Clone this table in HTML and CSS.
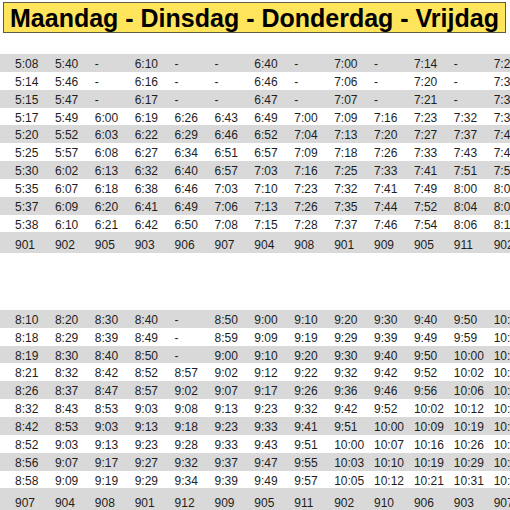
FILE: index.html
```html
<!DOCTYPE html>
<html lang="nl">
<head>
<meta charset="utf-8">
<title>Dienstregeling</title>
<link rel="stylesheet" href="styles.css">
</head>
<body>
<h1 class="banner">Maandag - Dinsdag - Donderdag - Vrijdag</h1>

<div class="table first">
  <div class="row"><span>5:08</span><span>5:40</span><span>-</span><span>6:10</span><span>-</span><span>-</span><span>6:40</span><span>-</span><span>7:00</span><span>-</span><span>7:14</span><span>-</span><span>7:28</span></div>
  <div class="row"><span>5:14</span><span>5:46</span><span>-</span><span>6:16</span><span>-</span><span>-</span><span>6:46</span><span>-</span><span>7:06</span><span>-</span><span>7:20</span><span>-</span><span>7:34</span></div>
  <div class="row"><span>5:15</span><span>5:47</span><span>-</span><span>6:17</span><span>-</span><span>-</span><span>6:47</span><span>-</span><span>7:07</span><span>-</span><span>7:21</span><span>-</span><span>7:35</span></div>
  <div class="row"><span>5:17</span><span>5:49</span><span>6:00</span><span>6:19</span><span>6:26</span><span>6:43</span><span>6:49</span><span>7:00</span><span>7:09</span><span>7:16</span><span>7:23</span><span>7:32</span><span>7:37</span></div>
  <div class="row"><span>5:20</span><span>5:52</span><span>6:03</span><span>6:22</span><span>6:29</span><span>6:46</span><span>6:52</span><span>7:04</span><span>7:13</span><span>7:20</span><span>7:27</span><span>7:37</span><span>7:41</span></div>
  <div class="row"><span>5:25</span><span>5:57</span><span>6:08</span><span>6:27</span><span>6:34</span><span>6:51</span><span>6:57</span><span>7:09</span><span>7:18</span><span>7:26</span><span>7:33</span><span>7:43</span><span>7:47</span></div>
  <div class="row"><span>5:30</span><span>6:02</span><span>6:13</span><span>6:32</span><span>6:40</span><span>6:57</span><span>7:03</span><span>7:16</span><span>7:25</span><span>7:33</span><span>7:41</span><span>7:51</span><span>7:55</span></div>
  <div class="row"><span>5:35</span><span>6:07</span><span>6:18</span><span>6:38</span><span>6:46</span><span>7:03</span><span>7:10</span><span>7:23</span><span>7:32</span><span>7:41</span><span>7:49</span><span>8:00</span><span>8:04</span></div>
  <div class="row"><span>5:37</span><span>6:09</span><span>6:20</span><span>6:41</span><span>6:49</span><span>7:06</span><span>7:13</span><span>7:26</span><span>7:35</span><span>7:44</span><span>7:52</span><span>8:04</span><span>8:08</span></div>
  <div class="row"><span>5:38</span><span>6:10</span><span>6:21</span><span>6:42</span><span>6:50</span><span>7:08</span><span>7:15</span><span>7:28</span><span>7:37</span><span>7:46</span><span>7:54</span><span>8:06</span><span>8:10</span></div>
  <div class="row bus"><span>901</span><span>902</span><span>905</span><span>903</span><span>906</span><span>907</span><span>904</span><span>908</span><span>901</span><span>909</span><span>905</span><span>911</span><span>902</span></div>
</div>

<div class="table second">
  <div class="row"><span>8:10</span><span>8:20</span><span>8:30</span><span>8:40</span><span>-</span><span>8:50</span><span>9:00</span><span>9:10</span><span>9:20</span><span>9:30</span><span>9:40</span><span>9:50</span><span>10:00</span></div>
  <div class="row"><span>8:18</span><span>8:29</span><span>8:39</span><span>8:49</span><span>-</span><span>8:59</span><span>9:09</span><span>9:19</span><span>9:29</span><span>9:39</span><span>9:49</span><span>9:59</span><span>10:09</span></div>
  <div class="row"><span>8:19</span><span>8:30</span><span>8:40</span><span>8:50</span><span>-</span><span>9:00</span><span>9:10</span><span>9:20</span><span>9:30</span><span>9:40</span><span>9:50</span><span>10:00</span><span>10:10</span></div>
  <div class="row"><span>8:21</span><span>8:32</span><span>8:42</span><span>8:52</span><span>8:57</span><span>9:02</span><span>9:12</span><span>9:22</span><span>9:32</span><span>9:42</span><span>9:52</span><span>10:02</span><span>10:12</span></div>
  <div class="row"><span>8:26</span><span>8:37</span><span>8:47</span><span>8:57</span><span>9:02</span><span>9:07</span><span>9:17</span><span>9:26</span><span>9:36</span><span>9:46</span><span>9:56</span><span>10:06</span><span>10:16</span></div>
  <div class="row"><span>8:32</span><span>8:43</span><span>8:53</span><span>9:03</span><span>9:08</span><span>9:13</span><span>9:23</span><span>9:32</span><span>9:42</span><span>9:52</span><span>10:02</span><span>10:12</span><span>10:22</span></div>
  <div class="row"><span>8:42</span><span>8:53</span><span>9:03</span><span>9:13</span><span>9:18</span><span>9:23</span><span>9:33</span><span>9:41</span><span>9:51</span><span>10:00</span><span>10:09</span><span>10:19</span><span>10:29</span></div>
  <div class="row"><span>8:52</span><span>9:03</span><span>9:13</span><span>9:23</span><span>9:28</span><span>9:33</span><span>9:43</span><span>9:51</span><span>10:00</span><span>10:07</span><span>10:16</span><span>10:26</span><span>10:36</span></div>
  <div class="row"><span>8:56</span><span>9:07</span><span>9:17</span><span>9:27</span><span>9:32</span><span>9:37</span><span>9:47</span><span>9:55</span><span>10:03</span><span>10:10</span><span>10:19</span><span>10:29</span><span>10:39</span></div>
  <div class="row"><span>8:58</span><span>9:09</span><span>9:19</span><span>9:29</span><span>9:34</span><span>9:39</span><span>9:49</span><span>9:57</span><span>10:05</span><span>10:12</span><span>10:21</span><span>10:31</span><span>10:41</span></div>
  <div class="row bus"><span>907</span><span>904</span><span>908</span><span>901</span><span>912</span><span>909</span><span>905</span><span>911</span><span>902</span><span>910</span><span>906</span><span>903</span><span>907</span></div>
</div>
</body>
</html>
```
FILE: styles.css
```css
html, body {
  margin: 0;
  padding: 0;
  background: #ffffff;
  overflow: hidden;
}

body {
  width: 510px;
  height: 510px;
  font-family: "Liberation Sans", Arial, sans-serif;
  color: #1e1e1e;
}

.banner {
  margin: 2px 4px 0 3px;
  padding: 1px 0 0 6px;
  background: #ffe55c;
  border: 1px solid #5f5b45;
  font-size: 25px;
  font-weight: bold;
  line-height: 28px;
  height: 28px;
  color: #000;
  white-space: nowrap;
  overflow: hidden;
}

.table {
  display: flex;
  flex-direction: column;
}

.table.first {
  margin-top: 21px;
}

.table.second {
  margin-top: 56.5px;
}

.row {
  display: grid;
  grid-template-columns: repeat(13, 39.9px);
  padding: 4px 0 0 15px;
  height: 13.85px;
  font-size: 12px;
  line-height: 13.85px;
  white-space: nowrap;
  overflow: hidden;
}

.row:nth-child(odd) {
  background: #d9d9d9;
}

.row.bus {
  height: 16px;
  padding-top: 5px;
  line-height: 16px;
}

.second .row.bus {
  padding-top: 7px;
  height: 16px;
}
```
